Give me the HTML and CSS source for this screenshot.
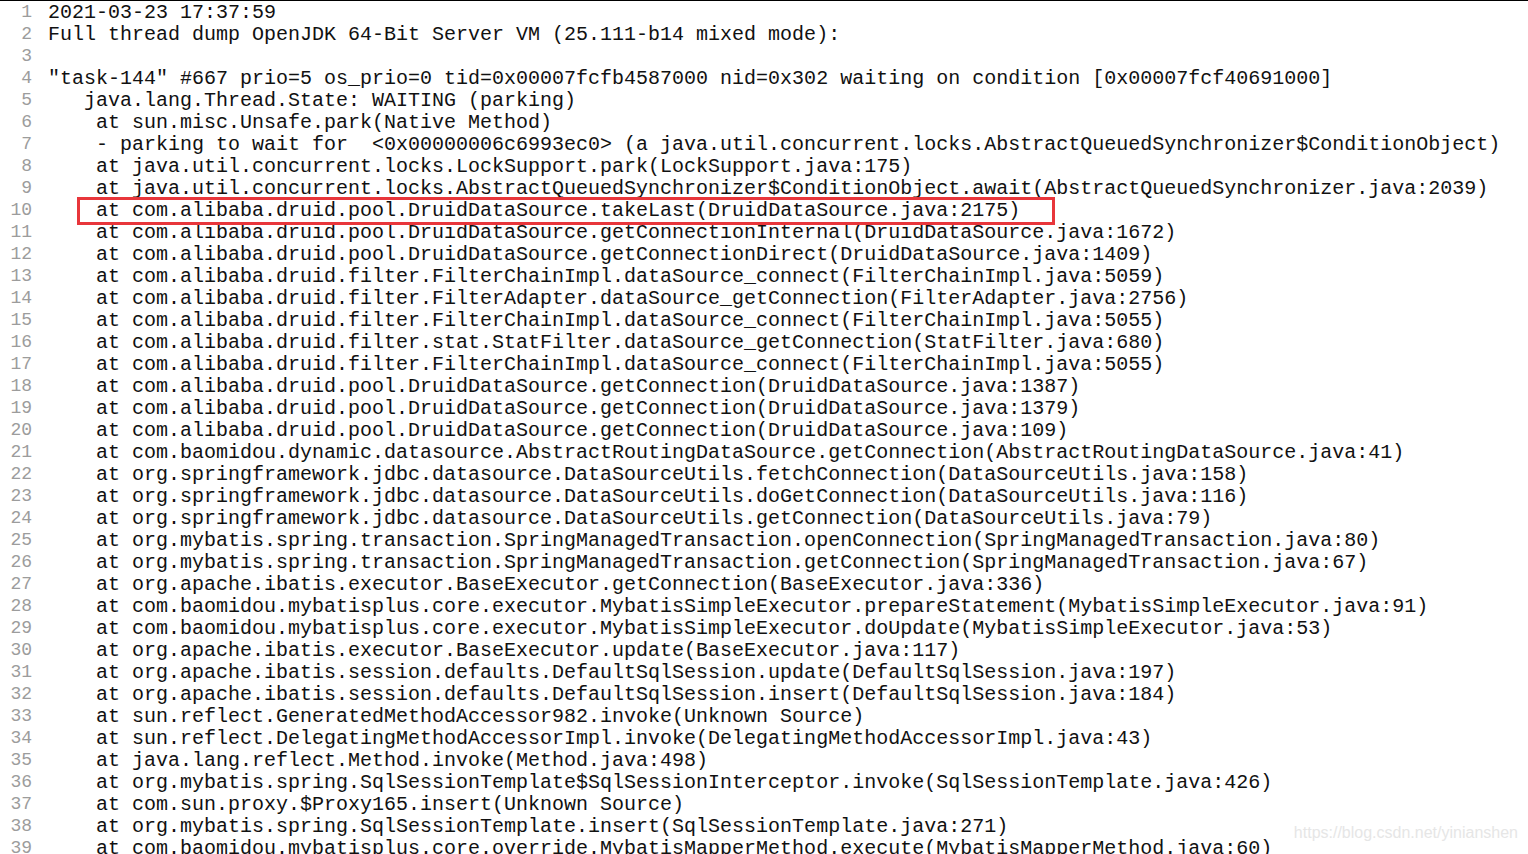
FILE: index.html
```html
<!DOCTYPE html>
<html>
<head>
<meta charset="utf-8">
<link rel="stylesheet" href="styles.css">
</head>
<body>
<div class="editor">
<div class="row"><span class="ln">1</span><span class="code">2021-03-23 17:37:59</span></div>
<div class="row"><span class="ln">2</span><span class="code">Full thread dump OpenJDK 64-Bit Server VM (25.111-b14 mixed mode):</span></div>
<div class="row"><span class="ln">3</span><span class="code"></span></div>
<div class="row"><span class="ln">4</span><span class="code">"task-144" #667 prio=5 os_prio=0 tid=0x00007fcfb4587000 nid=0x302 waiting on condition [0x00007fcf40691000]</span></div>
<div class="row"><span class="ln">5</span><span class="code">   java.lang.Thread.State: WAITING (parking)</span></div>
<div class="row"><span class="ln">6</span><span class="code">    at sun.misc.Unsafe.park(Native Method)</span></div>
<div class="row"><span class="ln">7</span><span class="code">    - parking to wait for  &lt;0x00000006c6993ec0&gt; (a java.util.concurrent.locks.AbstractQueuedSynchronizer$ConditionObject)</span></div>
<div class="row"><span class="ln">8</span><span class="code">    at java.util.concurrent.locks.LockSupport.park(LockSupport.java:175)</span></div>
<div class="row"><span class="ln">9</span><span class="code">    at java.util.concurrent.locks.AbstractQueuedSynchronizer$ConditionObject.await(AbstractQueuedSynchronizer.java:2039)</span></div>
<div class="row"><span class="ln">10</span><span class="code">    <span class="mark">at com.alibaba.druid.pool.DruidDataSource.takeLast(DruidDataSource.java:2175)</span></span></div>
<div class="row"><span class="ln">11</span><span class="code">    at com.alibaba.druid.pool.DruidDataSource.getConnectionInternal(DruidDataSource.java:1672)</span></div>
<div class="row"><span class="ln">12</span><span class="code">    at com.alibaba.druid.pool.DruidDataSource.getConnectionDirect(DruidDataSource.java:1409)</span></div>
<div class="row"><span class="ln">13</span><span class="code">    at com.alibaba.druid.filter.FilterChainImpl.dataSource_connect(FilterChainImpl.java:5059)</span></div>
<div class="row"><span class="ln">14</span><span class="code">    at com.alibaba.druid.filter.FilterAdapter.dataSource_getConnection(FilterAdapter.java:2756)</span></div>
<div class="row"><span class="ln">15</span><span class="code">    at com.alibaba.druid.filter.FilterChainImpl.dataSource_connect(FilterChainImpl.java:5055)</span></div>
<div class="row"><span class="ln">16</span><span class="code">    at com.alibaba.druid.filter.stat.StatFilter.dataSource_getConnection(StatFilter.java:680)</span></div>
<div class="row"><span class="ln">17</span><span class="code">    at com.alibaba.druid.filter.FilterChainImpl.dataSource_connect(FilterChainImpl.java:5055)</span></div>
<div class="row"><span class="ln">18</span><span class="code">    at com.alibaba.druid.pool.DruidDataSource.getConnection(DruidDataSource.java:1387)</span></div>
<div class="row"><span class="ln">19</span><span class="code">    at com.alibaba.druid.pool.DruidDataSource.getConnection(DruidDataSource.java:1379)</span></div>
<div class="row"><span class="ln">20</span><span class="code">    at com.alibaba.druid.pool.DruidDataSource.getConnection(DruidDataSource.java:109)</span></div>
<div class="row"><span class="ln">21</span><span class="code">    at com.baomidou.dynamic.datasource.AbstractRoutingDataSource.getConnection(AbstractRoutingDataSource.java:41)</span></div>
<div class="row"><span class="ln">22</span><span class="code">    at org.springframework.jdbc.datasource.DataSourceUtils.fetchConnection(DataSourceUtils.java:158)</span></div>
<div class="row"><span class="ln">23</span><span class="code">    at org.springframework.jdbc.datasource.DataSourceUtils.doGetConnection(DataSourceUtils.java:116)</span></div>
<div class="row"><span class="ln">24</span><span class="code">    at org.springframework.jdbc.datasource.DataSourceUtils.getConnection(DataSourceUtils.java:79)</span></div>
<div class="row"><span class="ln">25</span><span class="code">    at org.mybatis.spring.transaction.SpringManagedTransaction.openConnection(SpringManagedTransaction.java:80)</span></div>
<div class="row"><span class="ln">26</span><span class="code">    at org.mybatis.spring.transaction.SpringManagedTransaction.getConnection(SpringManagedTransaction.java:67)</span></div>
<div class="row"><span class="ln">27</span><span class="code">    at org.apache.ibatis.executor.BaseExecutor.getConnection(BaseExecutor.java:336)</span></div>
<div class="row"><span class="ln">28</span><span class="code">    at com.baomidou.mybatisplus.core.executor.MybatisSimpleExecutor.prepareStatement(MybatisSimpleExecutor.java:91)</span></div>
<div class="row"><span class="ln">29</span><span class="code">    at com.baomidou.mybatisplus.core.executor.MybatisSimpleExecutor.doUpdate(MybatisSimpleExecutor.java:53)</span></div>
<div class="row"><span class="ln">30</span><span class="code">    at org.apache.ibatis.executor.BaseExecutor.update(BaseExecutor.java:117)</span></div>
<div class="row"><span class="ln">31</span><span class="code">    at org.apache.ibatis.session.defaults.DefaultSqlSession.update(DefaultSqlSession.java:197)</span></div>
<div class="row"><span class="ln">32</span><span class="code">    at org.apache.ibatis.session.defaults.DefaultSqlSession.insert(DefaultSqlSession.java:184)</span></div>
<div class="row"><span class="ln">33</span><span class="code">    at sun.reflect.GeneratedMethodAccessor982.invoke(Unknown Source)</span></div>
<div class="row"><span class="ln">34</span><span class="code">    at sun.reflect.DelegatingMethodAccessorImpl.invoke(DelegatingMethodAccessorImpl.java:43)</span></div>
<div class="row"><span class="ln">35</span><span class="code">    at java.lang.reflect.Method.invoke(Method.java:498)</span></div>
<div class="row"><span class="ln">36</span><span class="code">    at org.mybatis.spring.SqlSessionTemplate$SqlSessionInterceptor.invoke(SqlSessionTemplate.java:426)</span></div>
<div class="row"><span class="ln">37</span><span class="code">    at com.sun.proxy.$Proxy165.insert(Unknown Source)</span></div>
<div class="row"><span class="ln">38</span><span class="code">    at org.mybatis.spring.SqlSessionTemplate.insert(SqlSessionTemplate.java:271)</span></div>
<div class="row"><span class="ln">39</span><span class="code">    at com.baomidou.mybatisplus.core.override.MybatisMapperMethod.execute(MybatisMapperMethod.java:60)</span></div>
</div>
<div class="watermark">https://blog.csdn.net/yinianshen</div>
</body>
</html>
```

FILE: styles.css
```css
html, body {
  margin: 0;
  padding: 0;
  background: #ffffff;
  width: 1528px;
  height: 854px;
  overflow: hidden;
}

body {
  position: relative;
}

.editor {
  border-top: 1px solid #000000;
  display: flex;
  flex-direction: column;
}

.row {
  display: flex;
  align-items: center;
  height: 22px;
  font-family: "Liberation Mono", "Courier New", monospace;
  white-space: pre;
}

.ln {
  width: 32px;
  flex: none;
  text-align: right;
  font-size: 18px;
  color: #9c9c9c;
}

.code {
  padding-left: 16px;
  font-size: 20px;
  color: #111111;
}

.mark {
  position: relative;
}

.mark::after {
  content: "";
  position: absolute;
  left: -19px;
  right: -35px;
  top: -2px;
  bottom: -3px;
  border: 3px solid #e8363b;
}

.watermark {
  position: absolute;
  right: 10px;
  top: 824px;
  font-family: "Liberation Sans", Arial, sans-serif;
  font-size: 16px;
  color: #e6e6e6;
}
```
